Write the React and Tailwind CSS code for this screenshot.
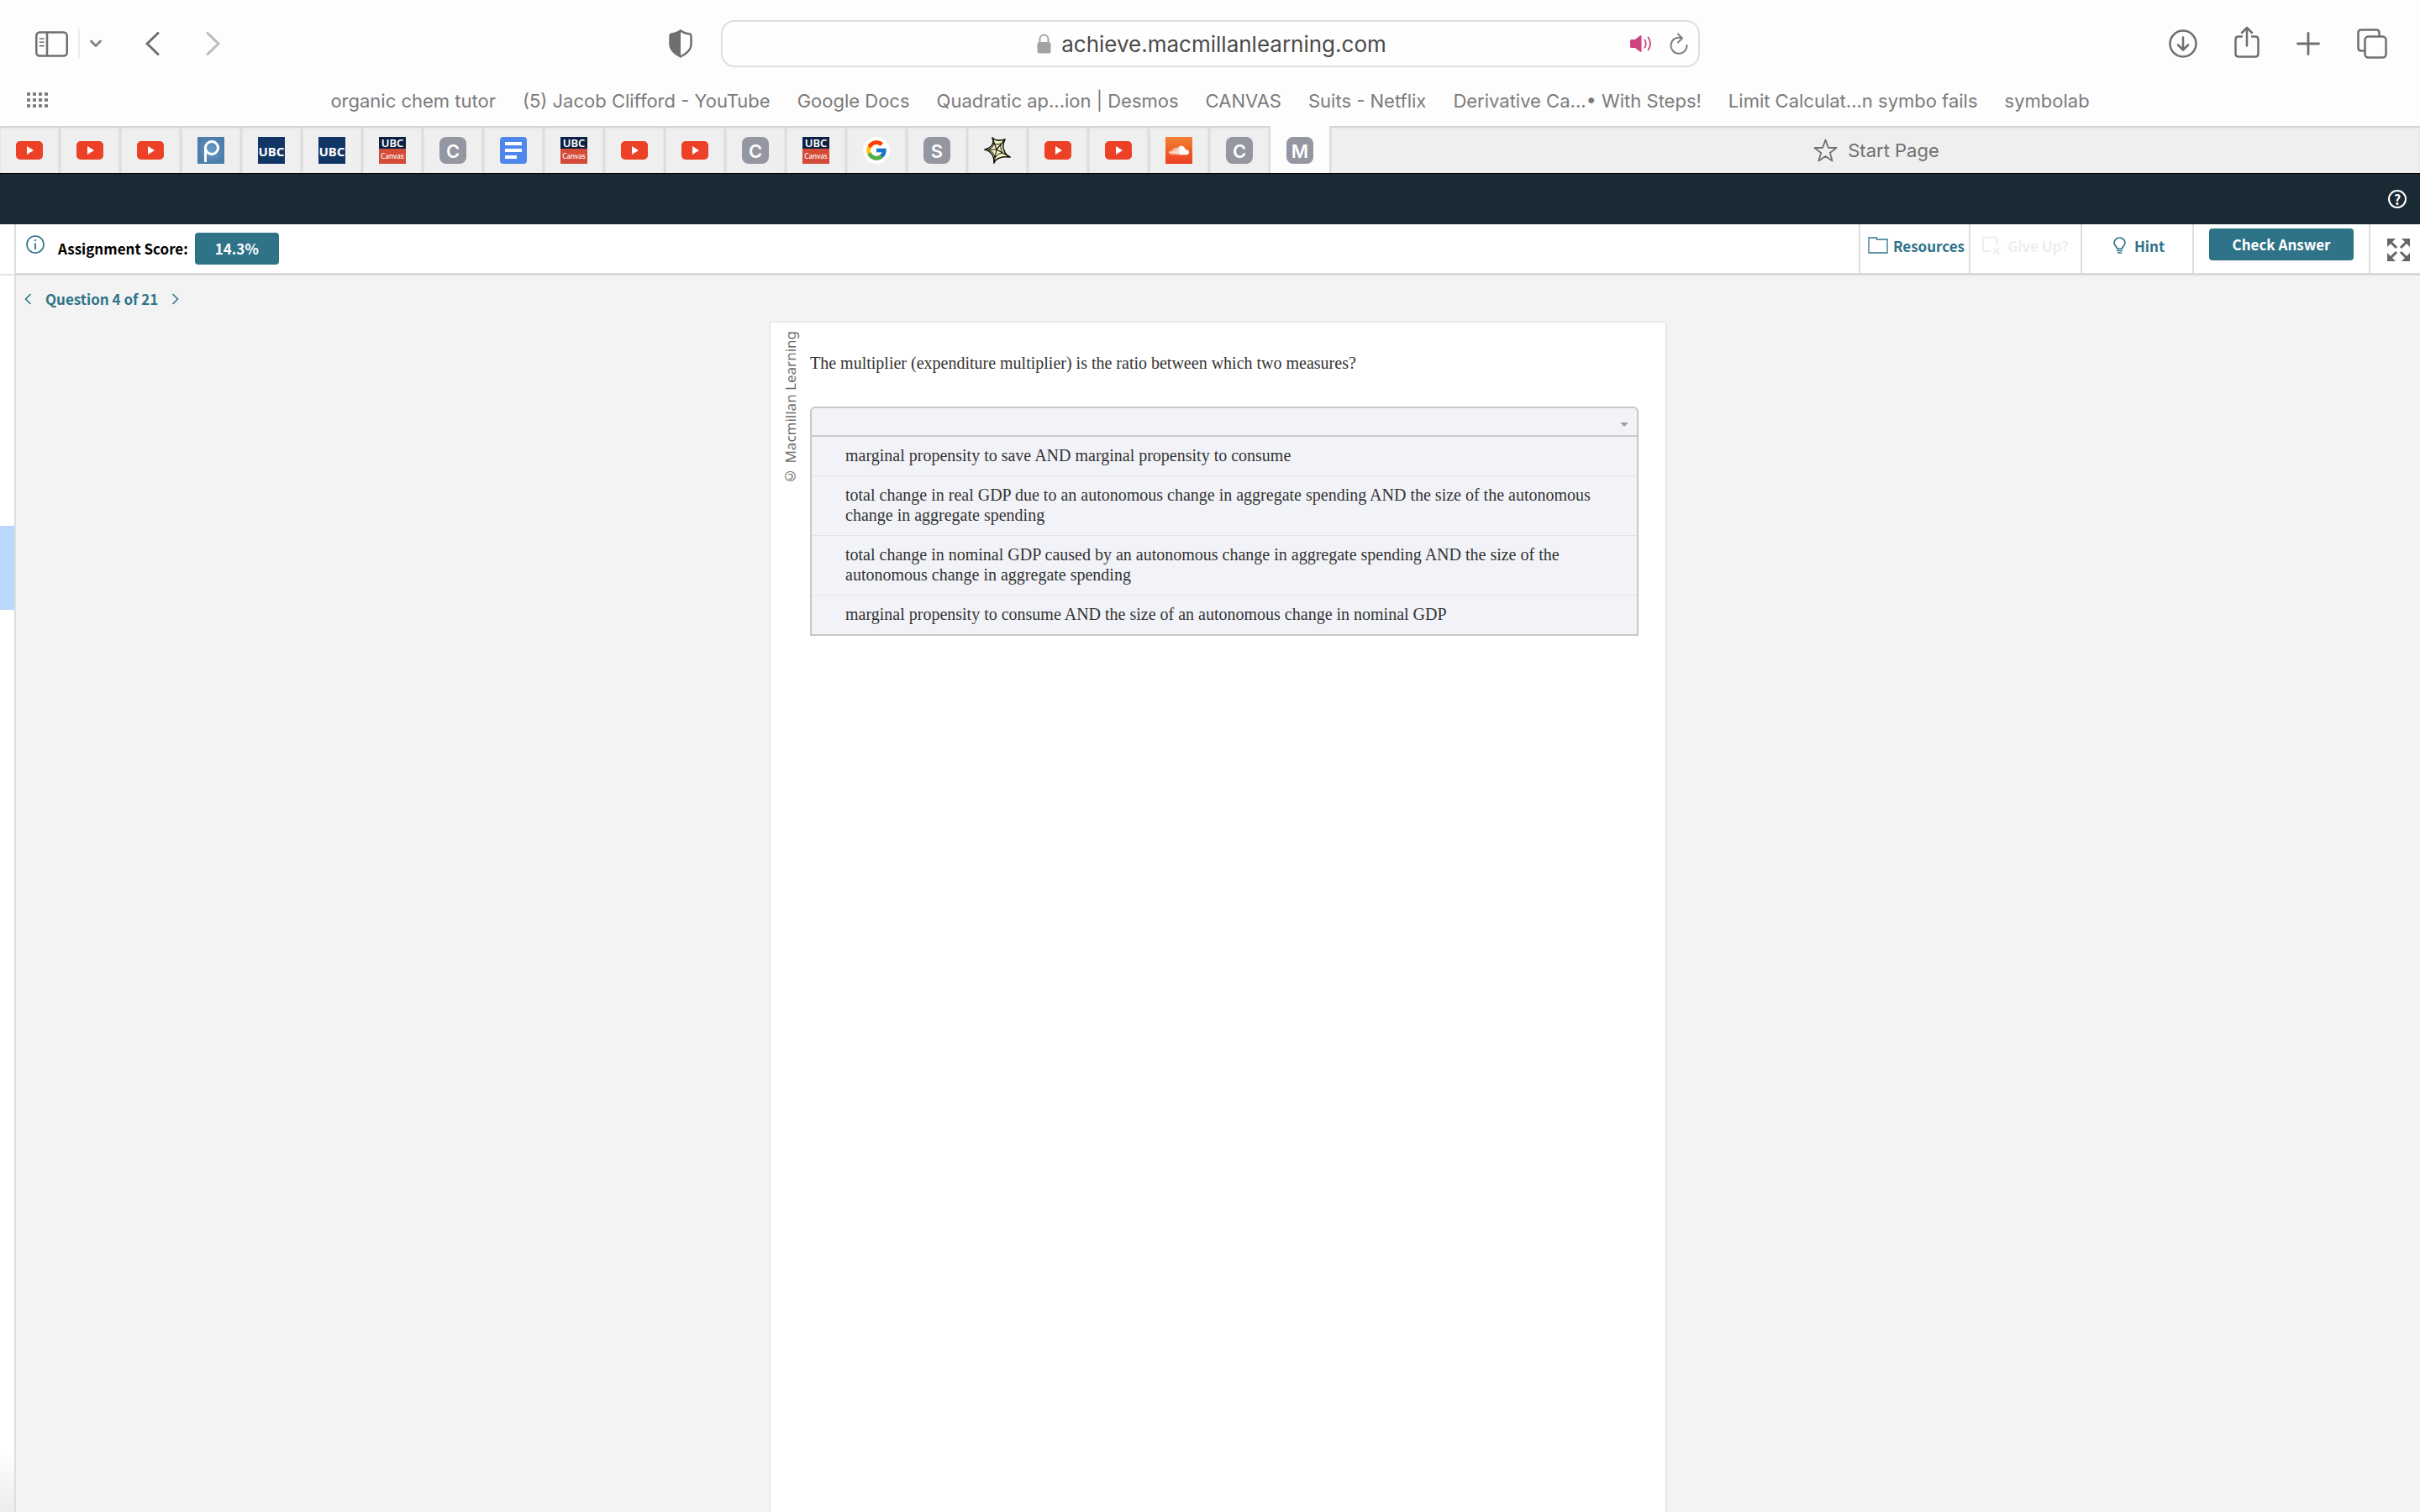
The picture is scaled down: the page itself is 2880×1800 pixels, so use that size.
import React, { useState } from 'react';
import clsx from 'clsx';
import { FcGoogle } from 'react-icons/fc';
import { FaSoundcloud } from 'react-icons/fa';

const bookmarks = [
  'organic chem tutor',
  '(5) Jacob Clifford - YouTube',
  'Google Docs',
  'Quadratic ap...ion | Desmos',
  'CANVAS',
  'Suits - Netflix',
  'Derivative Ca...• With Steps!',
  'Limit Calculat...n symbo fails',
  'symbolab'
];

const tabs = [
  'youtube', 'youtube', 'youtube', 'pearson', 'ubc', 'ubc', 'canvas', 'C', 'docs', 'canvas', 'youtube',
  'youtube', 'C', 'canvas', 'google', 'S', 'web', 'youtube', 'youtube', 'soundcloud', 'C', 'M'
];

const options = [
  'marginal propensity to save AND marginal propensity to consume',
  'total change in real GDP due to an autonomous change in aggregate spending AND the size of the autonomous change in aggregate spending',
  'total change in nominal GDP caused by an autonomous change in aggregate spending AND the size of the autonomous change in aggregate spending',
  'marginal propensity to consume AND the size of an autonomous change in nominal GDP'
];

function Favicon({ type }) {
  switch (type) {
    case 'youtube':
      return (
        <svg width="32" height="22" viewBox="0 0 32 22">
          <rect width="32" height="22" rx="5" fill="#ec4027" />
          <path d="M13 6v10l8-5z" fill="#fff" />
        </svg>
      );
    case 'pearson':
      return (
        <svg width="32" height="32" viewBox="0 0 32 32" fill="none">
          <defs>
            <radialGradient id="pearson-bg">
              <stop offset="0" stopColor="#6b9bc6" />
              <stop offset="1" stopColor="#4b7dab" />
            </radialGradient>
          </defs>
          <rect width="32" height="32" fill="url(#pearson-bg)" />
          <circle cx="17" cy="13" r="7.500" stroke="#fff" strokeWidth="3" />
          <path d="M9.500 30V13" stroke="#fff" strokeWidth="3" />
        </svg>
      );
    case 'ubc':
      return (
        <span className="flex h-8 w-8 items-center justify-center bg-[#113565] pt-0.5 font-['Noto_Sans'] text-[15px] leading-none font-bold text-white">
          UBC
        </span>
      );
    case 'canvas':
      return (
        <span className="flex h-8 w-8 flex-col font-['Noto_Sans'] text-white">
          <span className="flex h-3.5 items-center justify-center bg-[#0d2144] text-[13px] leading-none font-semibold">UBC</span>
          <span className="flex flex-1 items-center justify-center bg-[#d44c38] text-[8px] leading-none font-medium">Canvas</span>
        </span>
      );
    case 'docs':
      return (
        <svg width="32" height="32" viewBox="0 0 32 32">
          <rect width="32" height="32" rx="4" fill="#4f87ed" />
          <path d="M6 6h20v4H6zM6 14h20v4H6zM6 22h14v4H6z" fill="#fff" />
        </svg>
      );
    case 'google':
      return (
        <span className="flex h-8 w-8 items-center justify-center rounded-full bg-white">
          <FcGoogle className="h-7 w-7" />
        </span>
      );
    case 'web':
      return (
        <svg width="32" height="32" viewBox="0 0 32 32" fill="none" stroke="#15150f" strokeLinejoin="round" strokeLinecap="round">
          <path
            d="M10 1Q15 6 25 3Q21 11 24 16Q25 21 31 24Q22 23 19 25Q14 26 12 31Q12 23 9 20Q6 16 1 15Q8 13 10 9Q12 5 10 1Z"
            fill="#f6f4c4"
            strokeWidth="1.5"
          />
          <path d="M15 15L10 1M15 15L25 3M15 15L31 24M15 15L12 31M15 15L1 15" strokeWidth="1.2" />
          <path d="M12 8Q16 10 20 8Q19 14 22 19Q17 19 13 25Q12 18 6 15Q11 13 12 8Z" strokeWidth="1" />
        </svg>
      );
    case 'soundcloud':
      return (
        <span className="flex h-8 w-8 items-center justify-center bg-linear-to-b from-[#f28033] to-[#ec3b22]">
          <FaSoundcloud className="h-6 w-6 text-white" />
        </span>
      );
    default:
      return (
        <span className="flex h-8 w-8 items-center justify-center rounded-lg bg-[#9496a1] pt-0.5 text-[22px] leading-none font-semibold text-white">
          {type}
        </span>
      );
  }
}

function BrowserToolbar() {
  const [url, setUrl] = useState('achieve.macmillanlearning.com');

  return (
    <div className="grid h-[104px] grid-cols-[1fr_minmax(0,1165px)_1fr] items-center text-[#6f6f6f]">
      <div className="flex items-center pr-[34px] pl-[42px]">
        <button type="button" aria-label="Sidebar">
          <svg width="39" height="31" viewBox="0 0 39 31" fill="none" stroke="currentColor" strokeWidth="2.500" strokeLinecap="round">
            <rect x="1.250" y="1.500" width="36.500" height="28" rx="4" />
            <path d="M14 2v27" />
            <path d="M5.500 9h4.500M5.500 13.300h4.500M5.500 17.600h4.500" strokeWidth="1.600" />
          </svg>
        </button>
        <span className="ml-3 h-9 w-0.5 bg-[#ececec]" />
        <button type="button" aria-label="Tab groups" className="ml-3">
          <svg width="14" height="10" viewBox="0 0 14 10" fill="none" stroke="#85858b" strokeWidth="3" strokeLinecap="round" strokeLinejoin="round">
            <path d="M1.500 2L7 7.500L12.500 2" />
          </svg>
        </button>
        <button type="button" aria-label="Back" className="ml-[52px]">
          <svg width="17" height="28" viewBox="0 0 17 28" fill="none" stroke="currentColor" strokeWidth="3" strokeLinecap="round" strokeLinejoin="round">
            <path d="M15 1.500L2 14L15 26.500" />
          </svg>
        </button>
        <button type="button" aria-label="Forward" className="ml-[55px] text-[#bcbcbc]">
          <svg width="17" height="28" viewBox="0 0 17 28" fill="none" stroke="currentColor" strokeWidth="3" strokeLinecap="round" strokeLinejoin="round">
            <path d="M2 1.500L15 14L2 26.500" />
          </svg>
        </button>
        <button type="button" aria-label="Privacy report" className="ml-auto">
          <svg width="28" height="34" viewBox="0 0 28 34">
            <path d="M14 1.500C17 4 21 5 25 5.500Q26.500 6 26.500 8V18C26.500 24 21 29 14 32.500C7 29 1.500 24 1.500 18V8Q1.500 6 3 5.500C7 5 11 4 14 1.500Z" fill="none" stroke="currentColor" strokeWidth="2.500" />
            <path d="M14 1.500C11 4 7 5 3 5.500Q1.500 6 1.500 8V18C1.500 24 7 29 14 32.500Z" fill="currentColor" />
          </svg>
        </button>
      </div>

      <div className="grid h-14 grid-cols-[1fr_auto_1fr] items-center rounded-2xl border-2 border-[#dedede] bg-[#fefefe]">
        <span />
        <div className="flex items-center gap-3 pl-1">
          <svg width="17" height="24" viewBox="0 0 17 24">
            <rect x="0.500" y="10" width="16" height="13.500" rx="2.500" fill="#a3a3a3" />
            <path d="M3.500 11V6.500a5 5 0 0 1 10 0V11" fill="none" stroke="#a3a3a3" strokeWidth="2" />
          </svg>
          <input
            aria-label="Address"
            value={url}
            onChange={(e) => setUrl(e.target.value)}
            className="[field-sizing:content] bg-transparent pt-0.5 text-[26px] leading-8 text-[#4a4a4a] outline-none"
          />
        </div>
        <div className="flex items-center justify-end gap-5 pr-3">
          <button type="button" aria-label="Mute tab">
            <svg width="28" height="22" viewBox="0 0 28 22" fill="none" stroke="#cf4280" strokeWidth="1.800" strokeLinecap="round">
              <path d="M1 7.500Q1 6 2.500 6H7L13 1.200Q14.500 0.500 14.500 2V20Q14.500 21.500 13 20.800L7 16H2.500Q1 16 1 14.500Z" fill="#cf4280" stroke="none" />
              <path d="M18.500 6.500Q21 11 18.500 15.500M22.500 3.500Q27.500 11 22.500 18.500" />
            </svg>
          </button>
          <button type="button" aria-label="Reload">
            <svg width="22" height="26" viewBox="0 0 22 26" fill="none" stroke="#7d7d7d" strokeWidth="2" strokeLinecap="round" strokeLinejoin="round">
              <path d="M14 6.200A9.500 9.500 0 1 0 20.500 15" />
              <path d="M10 1.500L15 6.500L10 11.500" />
            </svg>
          </button>
        </div>
      </div>

      <div className="flex items-center justify-end gap-11 pr-[39px]">
        <button type="button" aria-label="Downloads">
          <svg width="34" height="34" viewBox="0 0 34 34" fill="none" stroke="currentColor" strokeWidth="2.500" strokeLinecap="round" strokeLinejoin="round">
            <circle cx="17" cy="17" r="15.500" />
            <path d="M17 9.500v14.500M11 18.500l6 6l6-6" />
          </svg>
        </button>
        <button type="button" aria-label="Share" className="pb-1">
          <svg width="30" height="38" viewBox="0 0 30 38" fill="none" stroke="currentColor" strokeWidth="2.500" strokeLinecap="round" strokeLinejoin="round">
            <path d="M10 12.500H5Q1.500 12.500 1.500 16V33Q1.500 36.500 5 36.500H25Q28.500 36.500 28.500 33V16Q28.500 12.500 25 12.500H20" strokeLinecap="butt" />
            <path d="M15 23.500V2M9 8l6-6l6 6" />
          </svg>
        </button>
        <button type="button" aria-label="New tab">
          <svg width="28" height="28" viewBox="0 0 28 28" fill="none" stroke="currentColor" strokeWidth="2.800" strokeLinecap="round">
            <path d="M14 1.500v25M1.500 14h25" />
          </svg>
        </button>
        <button type="button" aria-label="Tab overview">
          <svg width="36" height="36" viewBox="0 0 36 36" fill="none" stroke="currentColor" strokeWidth="2.500">
            <rect x="9.500" y="9.500" width="25" height="25" rx="4" />
            <path d="M9.500 26.500H5Q1.500 26.500 1.500 23V5Q1.500 1.500 5 1.500H23Q26.500 1.500 26.500 5V9.500" />
          </svg>
        </button>
      </div>
    </div>
  );
}

function BookmarksBar() {
  return (
    <nav className="grid h-[46px] grid-cols-[1fr_auto_1fr] items-start px-8 text-[#7b7b7b]">
      <button type="button" aria-label="Show all bookmarks" className="justify-self-start pt-1.5">
        <svg width="25" height="19" viewBox="0 0 25 19" fill="currentColor">
          {[0, 7, 14].map((y) =>
            [0, 7, 14, 21].map((x) => <rect key={`${x}-${y}`} x={x} y={y} width="4" height="4" rx="1" />)
          )}
        </svg>
      </button>
      <div className="flex gap-8 text-[22px] leading-8 whitespace-nowrap">
        {bookmarks.map((name) => (
          <a key={name} href="#">
            {name}
          </a>
        ))}
      </div>
      <span />
    </nav>
  );
}

function TabBar() {
  return (
    <div className="flex h-14 bg-[#efefef] text-[#707070]">
      {tabs.map((type, i) => (
        <button
          key={i}
          type="button"
          aria-label={`Tab ${i + 1}`}
          className={clsx(
            'flex w-[72px] shrink-0 items-center justify-center border-r-2 border-[#dcdcdc] pt-0.5',
            i === tabs.length - 1 ? 'bg-[#fdfdfd]' : 'shadow-[inset_0_2px_2px_#cfcfcf]'
          )}
        >
          <Favicon type={type} />
        </button>
      ))}
      <button type="button" className="flex flex-1 items-center justify-center gap-3 pt-0.5 pl-0.5 text-[22px] leading-8 shadow-[inset_0_2px_2px_#cfcfcf]">
        <svg width="29" height="28" viewBox="0 0 29 28" fill="none" stroke="currentColor" strokeWidth="1.800" strokeLinejoin="round">
          <path d="M14.500 1.500L17.800 10.800L27.500 11L19.800 17L22.600 26.500L14.500 20.900L6.400 26.500L9.200 17L1.500 11L11.200 10.800Z" />
        </svg>
        Start Page
      </button>
    </div>
  );
}

function AssignmentBar() {
  return (
    <div className="flex h-[61px] items-stretch border-b-3 border-[#d8d8d8] bg-white text-[17px] leading-6 font-bold text-[#2f7389]">
      <div className="flex flex-1 items-center pl-3">
        <svg width="22" height="22" viewBox="0 0 22 22" fill="none" stroke="currentColor" strokeWidth="1.600" className="mb-2.5">
          <circle cx="11" cy="11" r="10" />
          <path d="M11 9.500v7.500M11 5v2" strokeWidth="1.800" />
        </svg>
        <span className="ml-4 text-black">Assignment Score:</span>
        <span className="ml-2 flex h-[38px] w-[100px] items-center justify-center rounded-sm bg-[#2f7389] text-white">14.3%</span>
      </div>
      <button type="button" className="flex w-[131px] items-center justify-center gap-1.5 border-l-2 border-[#dedede] pb-1.5 pl-1">
        <svg width="24" height="20" viewBox="0 0 24 20" fill="none" stroke="currentColor" strokeWidth="1.300" className="mb-0.5">
          <path d="M1 1H10.500V3H23V19H1Z" />
        </svg>
        Resources
      </button>
      <button type="button" disabled className="flex w-[133px] items-center justify-center gap-2 border-l-2 border-[#dedede] pb-1.5 text-[#eeeeee]">
        <svg width="22" height="22" viewBox="0 0 22 22" fill="none" stroke="currentColor" strokeWidth="2" className="mb-0.5">
          <path d="M10 18H1V1.500H17.500V11" />
          <path d="M13.500 14.500l7 7M20.500 14.500l-7 7" />
        </svg>
        Give Up?
      </button>
      <button type="button" className="flex w-[133px] items-center justify-center gap-2.5 border-l-2 border-[#dedede] pb-1.5 pl-1">
        <svg width="15" height="20" viewBox="0 0 15 20" fill="none" stroke="currentColor" strokeWidth="1.700" className="mb-0.5">
          <path d="M4.500 14C4.500 11.500 1 10.500 1 7A6.500 6 0 0 1 14 7C14 10.500 10.500 11.500 10.500 14Z" />
          <path d="M4 16.500h7M5 19h5" />
        </svg>
        Hint
      </button>
      <div className="flex w-[210px] items-start justify-center border-l-2 border-[#dedede] pt-[5px]">
        <button type="button" className="h-[38px] w-[172px] rounded-sm bg-[#2f7389] text-white">
          Check Answer
        </button>
      </div>
      <button type="button" aria-label="Full screen" className="flex w-[61px] items-center justify-center border-l-2 border-[#dedede] pt-0.5 pr-3 pl-5 text-[#666666]">
        <svg width="27" height="27" viewBox="0 0 27 27" fill="currentColor" stroke="currentColor">
          <path d="M0 0H10L0 10ZM27 0V10L17 0ZM0 27V17L10 27ZM27 27H17L27 17Z" stroke="none" />
          <path d="M4 4L11 11M23 4L16 11M4 23L11 16M23 23L16 16" strokeWidth="3" />
        </svg>
      </button>
    </div>
  );
}

function QuestionCard() {
  const [answer, setAnswer] = useState('');

  return (
    <main className="mx-auto flex w-full max-w-[1065px] flex-1 bg-white font-['Liberation_Serif',serif] text-[20px] leading-6 text-[#333333] shadow-[0_0_2px_#bbbbbb]">
      <div className="flex w-[47px] shrink-0 items-start justify-center pt-2.5">
        <span className="rotate-180 font-['Noto_Sans',sans-serif] text-[17px] leading-6 text-[#6b6b6b] [writing-mode:vertical-rl]">
          © Macmillan Learning
        </span>
      </div>
      <div className="flex-1 pt-9 pr-8">
        <label htmlFor="answer" className="block">
          The multiplier (expenditure multiplier) is the ratio between which two measures?
        </label>
        <div className="mt-10 rounded-t-md border-2 border-[#c8c8c8] bg-[#f2f3f8]">
          <div className="relative border-b-2 border-[#c8c8c8]">
            <select
              id="answer"
              value={answer}
              onChange={(e) => setAnswer(e.target.value)}
              className="block h-8 w-full appearance-none bg-transparent pl-10 outline-none"
            >
              <option value="" />
              {options.map((text) => (
                <option key={text} value={text}>
                  {text}
                </option>
              ))}
            </select>
            <svg width="10" height="5" viewBox="0 0 10 5" className="pointer-events-none absolute right-2.5 bottom-2.5">
              <path d="M0 0H10L5 5Z" fill="#a0a0a0" />
            </svg>
          </div>
          <ul>
            {options.map((text) => (
              <li key={text} className="border-[#e2e3e7] not-last:border-b">
                <button type="button" onClick={() => setAnswer(text)} className="w-full pt-2.5 pr-10 pb-3 pl-10 text-left">
                  {text}
                </button>
              </li>
            ))}
          </ul>
        </div>
      </div>
    </main>
  );
}

function App() {
  return (
    <div className="flex min-h-screen flex-col bg-[#f3f3f3] font-['Inter',sans-serif]">
      <header className="bg-[#fdfdfd]">
        <BrowserToolbar />
        <BookmarksBar />
        <TabBar />
      </header>

      <div className="flex h-[61px] items-center justify-end border-t border-black bg-[#1a2a34] pr-4 text-white">
        <button type="button" aria-label="Help" className="flex h-[22px] w-[22px] items-center justify-center rounded-full border-2 border-white font-['Noto_Sans_CJK_SC',sans-serif] text-[16px] leading-none font-bold">
          ?
        </button>
      </div>

      <div className="flex flex-1">
        {/* Collapsed side panel */}
        <aside className="flex w-[19px] shrink-0 flex-col border-r-2 border-[#dedede] bg-white">
          <div className="h-[61px] border-b-2 border-[#e4e4e4]" />
          <div className="mt-[298px] h-[100px] bg-[#b8d9fc]" />
          <div className="mt-auto h-[75px] bg-linear-to-b from-white to-[#ececec]" />
        </aside>

        <div className="flex min-w-0 flex-1 flex-col font-['Noto_Sans_CJK_SC',sans-serif]">
          <AssignmentBar />
          <div className="flex h-14 items-center gap-4 pl-2.5 text-[17px] leading-6 font-bold text-[#2f7389]">
            <button type="button" aria-label="Previous question">
              <svg width="9" height="14" viewBox="0 0 9 14" fill="none" stroke="currentColor" strokeWidth="1.600">
                <path d="M7.500 1L1.500 7L7.500 13" />
              </svg>
            </button>
            <span>Question 4 of 21</span>
            <button type="button" aria-label="Next question">
              <svg width="9" height="14" viewBox="0 0 9 14" fill="none" stroke="currentColor" strokeWidth="1.600">
                <path d="M1.500 1L7.500 7L1.500 13" />
              </svg>
            </button>
          </div>
          <QuestionCard />
        </div>
      </div>
    </div>
  );
}

export default App;
